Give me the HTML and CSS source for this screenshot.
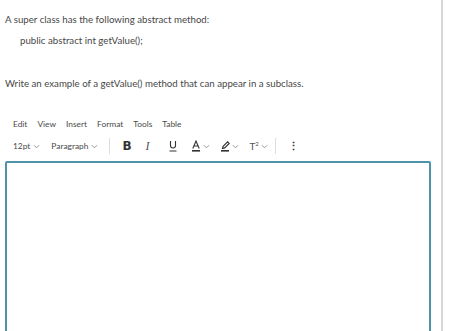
FILE: index.html
```html
<!DOCTYPE html>
<html lang="en">
<head>
    <meta charset="UTF-8">
    <title>Question</title>
    <link rel="stylesheet" href="styles.css">
</head>
<body>
    <div class="page">
        <div class="question">
            <p class="prompt">A super class has the following abstract method:</p>
            <p class="code">public abstract int getValue();</p>
            <p class="prompt task">Write an example of a getValue() method that can appear in a subclass.</p>
        </div>

        <div class="editor">
            <div class="menubar">
                <span>Edit</span>
                <span>View</span>
                <span>Insert</span>
                <span>Format</span>
                <span>Tools</span>
                <span>Table</span>
            </div>
            <div class="toolbar">
                <span class="drop">12pt <svg class="chev" viewBox="0 0 8 5"><path d="M1 1l3 3 3-3"/></svg></span>
                <span class="drop">Paragraph <svg class="chev" viewBox="0 0 8 5"><path d="M1 1l3 3 3-3"/></svg></span>
                <span class="sep"></span>
                <span class="tool bold">B</span>
                <span class="tool ital">I</span>
                <span class="tool">
                    <svg class="icon" viewBox="0 0 10 12"><path d="M2.5 1v4.5a2.5 2.5 0 0 0 5 0V1M1.5 11h7"/></svg>
                </span>
                <span class="tool wide">
                    <svg class="icon" viewBox="0 0 10 12"><path d="M1.8 8.5L5 1l3.2 7.5M3 6h4"/><rect class="fill" x="1" y="10" width="8" height="1.6"/></svg>
                    <svg class="chev" viewBox="0 0 8 5"><path d="M1 1l3 3 3-3"/></svg>
                </span>
                <span class="tool wide">
                    <svg class="icon" viewBox="0 0 10 12"><path d="M2.5 8.5l0.6-2.2 4.5-4.5 1.6 1.6-4.5 4.5z"/><rect class="fill" x="1" y="10" width="8" height="1.6"/></svg>
                    <svg class="chev" viewBox="0 0 8 5"><path d="M1 1l3 3 3-3"/></svg>
                </span>
                <span class="tool last">
                    <span class="sup">T<sup>2</sup></span>
                    <svg class="chev" viewBox="0 0 8 5"><path d="M1 1l3 3 3-3"/></svg>
                </span>
                <span class="sep"></span>
                <span class="tool more">&#8942;</span>
            </div>
            <div class="area"></div>
        </div>
    </div>
</body>
</html>
```

FILE: styles.css
```css
body {
    margin: 0;
    background: #fff;
    font-family: Lato, "Open Sans", sans-serif;
    color: #474747;
}
.page {
    width: 443px;
    height: 331px;
    border-right: 2px solid #d6d6d6;
    box-sizing: border-box;
    overflow: hidden;
}
.question {
    padding: 13px 0 0 5px;
    font-size: 9.7px;
}
.question p {
    margin: 0;
    line-height: 12px;
}
.code {
    padding: 9px 0 0 15px;
}
.task {
    padding-top: 31px;
}
.editor {
    padding: 30px 0 0 5px;
}
.menubar {
    display: flex;
    gap: 10px;
    padding-left: 8px;
    font-size: 8.4px;
    color: #4a4a4a;
    line-height: 10px;
}
.toolbar {
    display: flex;
    align-items: center;
    padding: 9px 0 0 8px;
    height: 16px;
    font-size: 8.4px;
    color: #4a4a4a;
}
.drop {
    display: flex;
    align-items: center;
    gap: 3px;
    margin-right: 11px;
}
.chev {
    width: 7px;
    height: 5px;
    fill: none;
    stroke: #888;
    stroke-width: 1;
}
.sep {
    width: 1px;
    height: 16px;
    background: #ddd;
    margin-right: 12px;
}
.tool {
    display: flex;
    align-items: center;
    gap: 2px;
    width: 23px;
    color: #333;
}
.tool.wide {
    width: 29px;
}
.tool.last {
    width: 26px;
}
.bold {
    font-weight: 700;
    font-size: 12px;
    font-family: "DejaVu Sans", sans-serif;
}
.ital {
    font-style: italic;
    font-family: "Liberation Serif", serif;
    font-size: 12px;
    color: #555;
}
.icon {
    width: 10px;
    height: 12px;
    fill: none;
    stroke: #333;
    stroke-width: 1.1;
}
.icon .fill {
    fill: #333;
    stroke: none;
}
.sup {
    font-size: 10px;
    color: #555;
}
.sup sup {
    font-size: 6px;
    vertical-align: 4px;
}
.more {
    font-size: 11px;
    font-weight: 700;
}
.area {
    margin-top: 7px;
    width: 426px;
    height: 200px;
    border: 2px solid #4f93a9;
    border-radius: 2px;
    box-sizing: border-box;
}
```
